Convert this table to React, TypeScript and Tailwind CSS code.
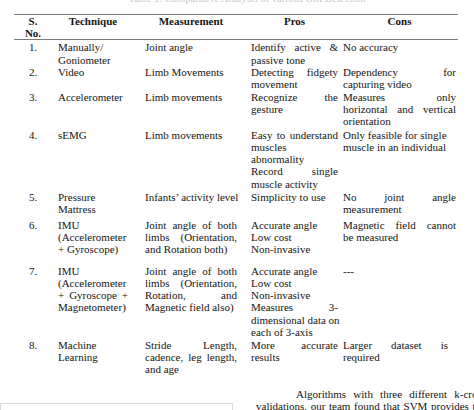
import React from "react";

type Row = { pt: string; cells: string[][] };

const colCls = [
  "w-[44px] pr-[6px] text-center",
  "w-[87px] pr-[17px]",
  "w-[106px] pr-[14px]",
  "w-[92px] pr-[5px]",
  "w-[115px] pr-[2px]",
];

const rows: Row[] = [
  {
    pt: "pt-[1px]",
    cells: [["1."], ["Manually/", "Goniometer"], ["Joint angle"], ["J:Identify active &", "passive tone"], ["No accuracy"]],
  },
  {
    pt: "pt-0",
    cells: [["2."], ["Video"], ["Limb Movements"], ["J:Detecting fidgety", "movement"], ["J:Dependency for", "capturing video"]],
  },
  {
    pt: "pt-[0.5px]",
    cells: [["3."], ["Accelerometer"], ["Limb movements"], ["J:Recognize the", "gesture"], ["J:Measures only", "J:horizontal and vertical", "orientation"]],
  },
  {
    pt: "pt-[1.5px]",
    cells: [
      ["4."],
      ["sEMG"],
      ["Limb movements"],
      ["J:Easy to understand", "muscles", "abnormality", "J:Record single", "muscle activity"],
      ["Only feasible for single", "muscle in an individual"],
    ],
  },
  {
    pt: "pt-[1px]",
    cells: [["5."], ["Pressure", "Mattress"], ["Infants’ activity level"], ["Simplicity to use"], ["J:No joint angle", "measurement"]],
  },
  {
    pt: "pt-[3.5px]",
    cells: [
      ["6."],
      ["IMU", "(Accelerometer", "+ Gyroscope)"],
      ["J:Joint angle of both", "J:limbs (Orientation,", "and Rotation both)"],
      ["Accurate angle", "Low cost", "Non-invasive"],
      ["J:Magnetic field cannot", "be measured"],
    ],
  },
  {
    pt: "pt-[9.5px]",
    cells: [
      ["7."],
      ["IMU", "(Accelerometer", "J:+ Gyroscope +", "Magnetometer)"],
      ["J:Joint angle of both", "J:limbs (Orientation,", "J:Rotation, and", "Magnetic field also)"],
      ["Accurate angle", "Low cost", "Non-invasive", "J:Measures 3-", "dimensional data on", "each of 3-axis"],
      ["---"],
    ],
  },
  {
    pt: "pt-[1px]",
    cells: [
      ["8."],
      ["Machine", "Learning"],
      ["J:Stride Length,", "J:cadence, leg length,", "and age"],
      ["J:More accurate", "results"],
      ["K:Larger dataset is", "required"],
    ],
  },
];

function Line({ t }: { t: string }) {
  if (t.startsWith("J:")) {
    return <div className="text-justify [text-align-last:justify] whitespace-nowrap">{t.slice(2)}</div>;
  }
  if (t.startsWith("K:")) {
    return <div className="text-justify [text-align-last:justify] whitespace-nowrap mr-[8px]">{t.slice(2)}</div>;
  }
  return <div className="whitespace-nowrap">{t}</div>;
}

export default function App() {
  return (
    <div className="w-[474px] h-[410px] overflow-hidden bg-white font-['Liberation_Serif','Times_New_Roman',serif] text-[11px] leading-[12.2px] text-[#151515]">
      <div className="h-[14px] overflow-hidden">
        <div className="mt-[-6px] pl-[20px] text-center text-[10.5px] leading-[10px] text-[#c8c8c8] whitespace-nowrap">
          Table 1: Comparative Analysis of various GM Detection
        </div>
      </div>
      <div className="ml-[14px] w-[444px] border-t-[1.5px] border-[#7d7d7d]">
        <div className="flex border-b-[1.5px] border-[#7d7d7d] font-bold">
          <div className={colCls[0]}>
            <div>S.</div>
            <div>No.</div>
          </div>
          <div className={colCls[1] + " text-center"}>Technique</div>
          <div className={colCls[2] + " text-center"}>Measurement</div>
          <div className={colCls[3] + " text-center"}>Pros</div>
          <div className={colCls[4] + " text-center"}>Cons</div>
        </div>
        {rows.map((r, i) => (
          <div key={i} className={"flex " + r.pt}>
            {r.cells.map((c, j) => (
              <div key={j} className={colCls[j]}>
                {c.map((t, k) => (
                  <Line key={k} t={t} />
                ))}
              </div>
            ))}
          </div>
        ))}
      </div>
      <div className="flex items-start">
        <div className="mt-[27.5px] w-[233px] h-[20px] border border-[#dadada] shrink-0"></div>
        <div className="ml-[23px] mt-[12.5px] w-[230px] shrink-0">
          <div className="pl-[40px] text-justify [text-align-last:justify] whitespace-nowrap">
            Algorithms with three different k-cross
          </div>
          <div className="text-justify [text-align-last:justify] whitespace-nowrap">
            validations, our team found that SVM provides the
          </div>
        </div>
      </div>
    </div>
  );
}
